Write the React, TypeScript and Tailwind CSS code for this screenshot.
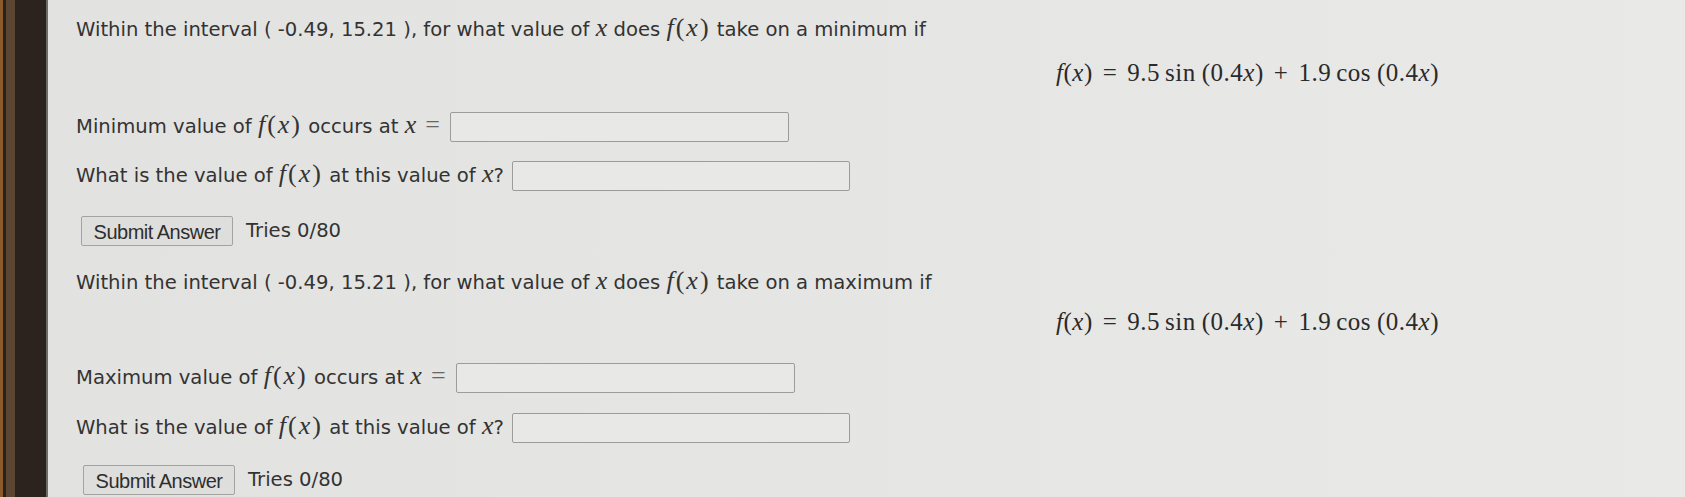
import React from 'react';

const sans = "font-['DejaVu_Sans',Verdana,sans-serif]";
const serif = "font-['Liberation_Serif','DejaVu_Serif',serif]";

const V = ({ children }: { children: React.ReactNode }) => (
  <span className={`${serif} italic text-[26px] leading-none`}>{children}</span>
);

const Fx = () => (
  <span className={`${serif} text-[26px] tracking-[2px] leading-none`}>
    <i>f</i>(<i>x</i>)
  </span>
);

const Formula = () => (
  <span className={`${serif} text-[25px] tracking-[0.5px] text-[#2a2a2a]`}>
    <i>f</i>(<i>x</i>)<span className="mx-[10px]">=</span>9.5<span className="ml-[5px] mr-[6px]">sin</span>(0.4<i>x</i>)
    <span className="mx-[10px]">+</span>1.9<span className="ml-[5px] mr-[6px]">cos</span>(0.4<i>x</i>)
  </span>
);

const Input = ({ w }: { w: string }) => (
  <div className={`${w} h-[30px] border border-[#9c9c9a] rounded-[2px] bg-[#e8e8e6]`} />
);

type BlockProps = {
  kind: string;
  tops: string[];
  btnMl: string;
};

const Block = ({ kind, tops, btnMl }: BlockProps) => (
  <div className="flex flex-col">
    <div className={`${tops[0]} h-[30px] flex items-center whitespace-nowrap`}>
      <span>
        Within the interval ( -0.49, 15.21 ), for what value of <V>x</V> does <Fx /> take on a {kind.toLowerCase()} if
      </span>
    </div>
    <div className={`${tops[1]} h-[30px] flex items-center pl-[980px] whitespace-nowrap`}>
      <Formula />
    </div>
    <div className={`${tops[2]} h-[30px] flex items-center whitespace-nowrap`}>
      <span>
        {kind} value of <Fx /> occurs at <V>x</V>
        <span className={`${serif} text-[26px] leading-none ml-[9px] mr-[10px] text-[#666]`}>=</span>
      </span>
      <Input w="w-[339px]" />
    </div>
    <div className={`${tops[3]} h-[30px] flex items-center whitespace-nowrap`}>
      <span>
        What is the value of <Fx /> at this value of <V>x</V>?
      </span>
      <span className="w-[8px]" />
      <Input w="w-[338px]" />
    </div>
    <div className={`${tops[4]} flex items-center whitespace-nowrap`}>
      <button
        className={`${btnMl} h-[30px] w-[152px] border border-[#a3a3a1] rounded-[2px] bg-[#dededc] text-[20px] tracking-[-0.5px] font-['Liberation_Sans',Arial,sans-serif] text-[#2e2e2e]`}
      >
        Submit Answer
      </button>
      <span className="ml-[13px]">Tries 0/80</span>
    </div>
  </div>
);

export default function App() {
  return (
    <div className="w-[1685px] h-[497px] overflow-hidden flex bg-[#e4e4e2]">
      {/* monitor bezel */}
      <div className="w-[48px] h-full flex shrink-0">
        <div className="w-[3px] bg-[#8a5a2a]" />
        <div className="w-[3px] bg-[#2a211c]" />
        <div className="w-[9px] bg-[#5b4634]" />
        <div className="w-[31px] bg-[#2c231f]" />
        <div className="w-[2px] bg-[#6e6a66]" />
      </div>
      <div className={`flex-1 pl-[28px] ${sans} text-[19.6px] text-[#333333] bg-gradient-to-r from-[#e2e2e0] to-[#e9e9e7]`}>
        <Block
          kind="Minimum"
          tops={['mt-[15px]', 'mt-[13px]', 'mt-[24px]', 'mt-[19px]', 'mt-[25px]']}
          btnMl="ml-[5px]"
        />
        <Block
          kind="Maximum"
          tops={['mt-[22px]', 'mt-[9px]', 'mt-[26px]', 'mt-[20px]', 'mt-[22px]']}
          btnMl="ml-[7px]"
        />
      </div>
    </div>
  );
}
